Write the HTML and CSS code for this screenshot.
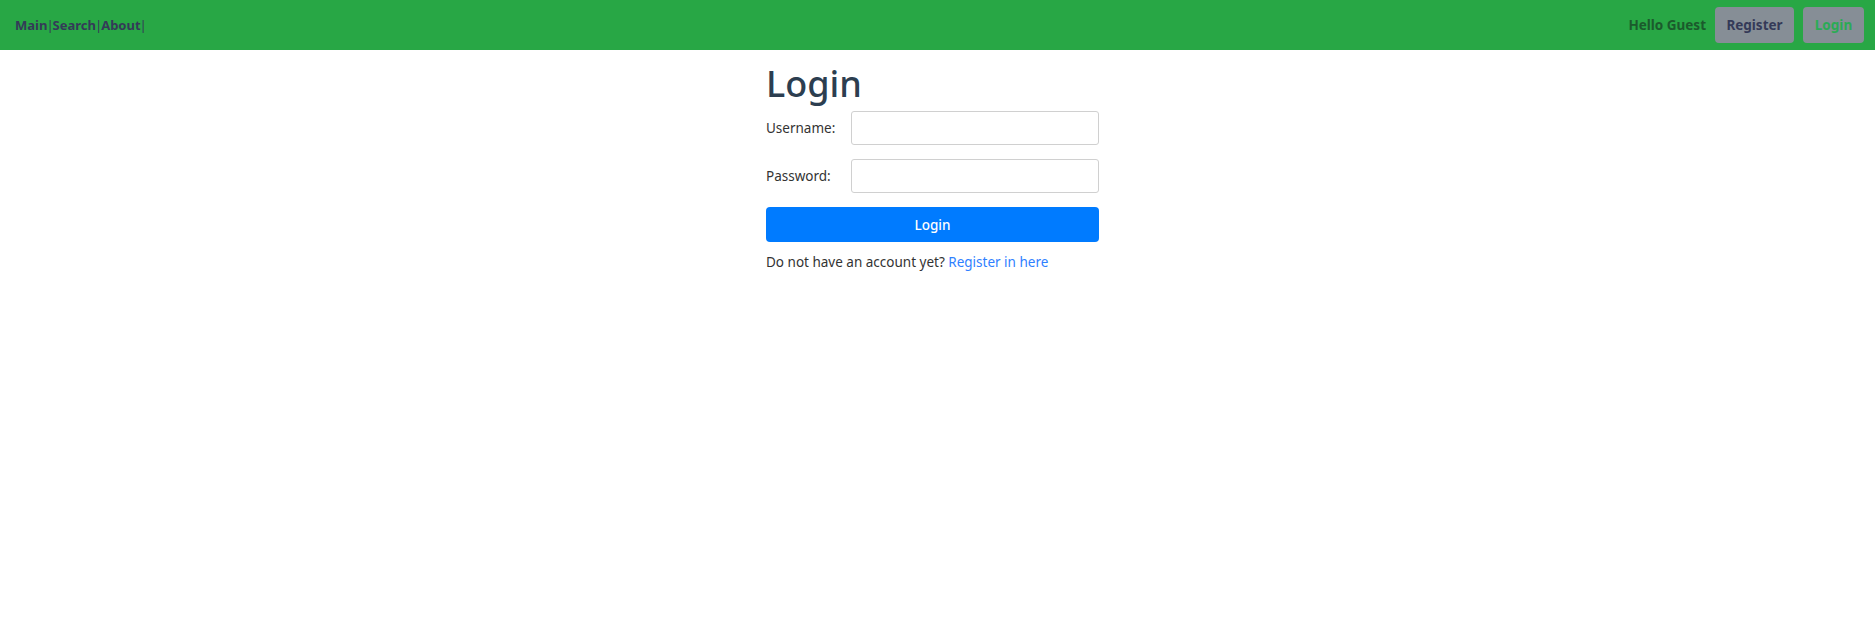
FILE: index.html
```html
<!DOCTYPE html>
<html lang="en">
<head>
<meta charset="utf-8">
<title>Login</title>
<link rel="stylesheet" href="styles.css">
</head>
<body>
<nav class="navbar">
  <div class="nav-links">
    <a class="nav-link" href="#">Main</a><span class="sep">|</span><a class="nav-link" href="#">Search</a><span class="sep">|</span><a class="nav-link" href="#">About</a><span class="sep">|</span>
  </div>
  <div class="nav-right">
    <span class="greeting">Hello Guest</span>
    <a class="nav-btn btn-register" href="#">Register</a>
    <a class="nav-btn btn-login" href="#">Login</a>
  </div>
</nav>
<main class="login-wrap">
  <h1 class="title">Login</h1>
  <form class="login-form">
    <div class="form-row">
      <label class="form-label" for="username">Username:</label>
      <input class="form-input" id="username" type="text">
    </div>
    <div class="form-row">
      <label class="form-label" for="password">Password:</label>
      <input class="form-input" id="password" type="password">
    </div>
    <button class="submit-btn" type="button">Login</button>
  </form>
  <p class="hint">Do not have an account yet? <a class="hint-link" href="#">Register in here</a></p>
</main>
</body>
</html>
```

FILE: styles.css
```css
* { box-sizing: border-box; }
body {
  margin: 0;
  font-family: "Noto Sans", "Open Sans", sans-serif;
  color: #333;
  background: #fff;
}
a { text-decoration: none; }
.navbar {
  height: 50px;
  background: #28a745;
  display: flex;
  align-items: center;
  justify-content: space-between;
  padding: 0 11px 0 15px;
}
.nav-links {
  font-size: 13px;
  font-weight: 700;
  color: #343a58;
}
.nav-link { color: #343a58; }
.sep {
  font-weight: 400;
  color: #343a58;
  margin: 0 -1px;
}
.nav-right {
  display: flex;
  align-items: center;
  gap: 9px;
  font-size: 13.5px;
  font-weight: 700;
}
.greeting { color: #1b5a2c; }
.nav-btn {
  display: flex;
  align-items: center;
  justify-content: center;
  height: 36px;
  border-radius: 4px;
  background: #868e96;
  padding: 0 8px;
}
.btn-register { color: #343a58; width: 79px; }
.btn-login { color: #2bab55; width: 61px; }
.login-wrap {
  width: 343px;
  margin: 0 auto;
  padding-right: 10px;
}
.title {
  font-size: 36px;
  font-weight: 500;
  line-height: 1.2;
  margin: 12px 0 0;
  color: #2c3e50;
}
.login-form {
  display: flex;
  flex-direction: column;
  gap: 14px;
  margin-top: 6px;
}
.form-row {
  display: flex;
  align-items: center;
}
.form-label {
  width: 85px;
  font-size: 13.5px;
  color: #333;
}
.form-input {
  width: 248px;
  height: 34px;
  border: 1px solid #d0d0d0;
  border-radius: 3px;
  padding: 4px 8px;
  font: inherit;
}
.submit-btn {
  height: 35px;
  border: none;
  border-radius: 4px;
  background: #007bff;
  color: #fff;
  font: inherit;
  font-size: 13.5px;
  font-weight: 500;
}
.hint {
  font-size: 13.5px;
  margin: 11px 0 0;
  color: #333;
}
.hint-link { color: #2f80ff; }
```
